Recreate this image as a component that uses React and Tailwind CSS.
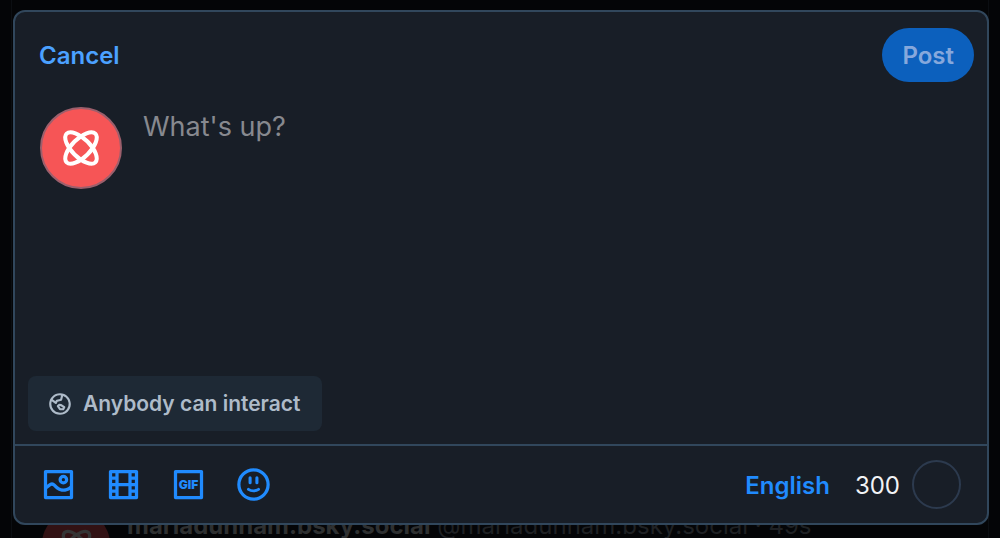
import React, { useState } from "react";

const MAX_LENGTH = 300;

const AtomIcon = ({ className }) => (
  <svg
    viewBox="0 0 24 24"
    fill="none"
    stroke="currentColor"
    strokeWidth="2.3"
    strokeLinejoin="round"
    className={className}
    aria-hidden="true"
  >
    <path d="M20.2 20.2c2.04-2.03.02-7.36-4.5-11.9-4.54-4.52-9.87-6.54-11.9-4.5-2.04 2.03-.02 7.36 4.5 11.9 4.54 4.52 9.87 6.54 11.9 4.5Z" />
    <path d="M15.7 15.7c4.52-4.54 6.54-9.87 4.5-11.9-2.03-2.04-7.36-.02-11.9 4.5-4.52 4.54-6.54 9.87-4.5 11.9 2.03 2.04 7.36.02 11.9-4.5Z" />
  </svg>
);

const Icon = ({ className, children }) => (
  <svg
    viewBox="0 0 24 24"
    fill="currentColor"
    fillRule="evenodd"
    className={className}
    aria-hidden="true"
  >
    {children}
  </svg>
);

const EarthIcon = () => (
  <Icon className="size-[26px]">
    <path d="M4.4 9.493C4.14 10.28 4 11.124 4 12a8 8 0 1 0 10.899-7.459l-.953 3.81a1 1 0 0 1-.726.727l-3.444.866-.772 1.533a1 1 0 0 1-1.493.35L4.4 9.493Zm.883-1.84L7.756 9.51l.44-.874a1 1 0 0 1 .649-.52l3.306-.832.807-3.227a7.993 7.993 0 0 0-7.676 3.597ZM2 12C2 6.477 6.477 2 12 2s10 4.477 10 10-4.477 10-10 10S2 17.523 2 12Zm8.43.162a1 1 0 0 1 .77-.29l1.89.121a1 1 0 0 1 .494.168l2.869 1.928a1 1 0 0 1 .336 1.277l-.973 1.946a1 1 0 0 1-.894.553h-2.92a1 1 0 0 1-.831-.445L9.225 14.5a1 1 0 0 1 .126-1.262l1.08-1.076Zm.915 1.913.177-.177 1.171.074 1.914 1.286-.303.607h-1.766l-1.194-1.79Z" />
  </Icon>
);

const ImageIcon = () => (
  <Icon className="size-[39px]">
    <path d="M3 4a1 1 0 0 1 1-1h16a1 1 0 0 1 1 1v16a1 1 0 0 1-1 1H4a1 1 0 0 1-1-1V4Zm2 1v7.213l1.246-.932.044-.03a3 3 0 0 1 3.863.454c1.468 1.58 2.941 2.749 4.847 2.749 1.703 0 2.855-.555 4-1.618V5H5Zm14 10.357c-1.112.697-2.386 1.097-4 1.097-2.81 0-4.796-1.755-6.313-3.388a1 1 0 0 0-1.269-.164L5 14.712V19h14v-3.643ZM15 8a1 1 0 1 0 0 2 1 1 0 0 0 0-2Zm-3 1a3 3 0 1 1 6 0 3 3 0 0 1-6 0Z" />
  </Icon>
);

const FilmIcon = () => (
  <Icon className="size-[39px]">
    <path d="M3 4a1 1 0 0 1 1-1h16a1 1 0 0 1 1 1v16a1 1 0 0 1-1 1H4a1 1 0 0 1-1-1V4Zm2 1v2h2V5H5Zm4 0v6h6V5H9Zm8 0v2h2V5h-2Zm2 4h-2v2h2V9Zm0 4h-2v2h2v-2Zm0 4h-2v2h2v-2Zm-4 2v-6H9v6h6Zm-8 0v-2H5v2h2Zm-2-4h2v-2H5v2Zm0-4h2V9H5v2Z" />
  </Icon>
);

const GifIcon = () => (
  <Icon className="size-[39px]">
    <path d="M3 4a1 1 0 0 1 1-1h16a1 1 0 0 1 1 1v16a1 1 0 0 1-1 1H4a1 1 0 0 1-1-1V4Zm2 1v14h14V5H5Z" />
    <text
      x="12"
      y="14.7"
      textAnchor="middle"
      fontSize="7.4"
      className="font-[Inter,sans-serif] font-black"
    >
      GIF
    </text>
  </Icon>
);

const EmojiIcon = () => (
  <svg
    viewBox="0 0 24 24"
    fill="none"
    stroke="currentColor"
    strokeWidth="2"
    strokeLinecap="round"
    className="size-[39px]"
    aria-hidden="true"
  >
    <circle cx="12" cy="12" r="9" />
    <path strokeWidth="1.9" d="M9.9 7.9v3M14.1 7.9v3" />
    <path strokeWidth="1.8" d="M8.9 15c1.7 1.2 4.5 1.2 6.2 0" />
  </svg>
);

const tools = [
  { label: "Add image", Glyph: ImageIcon },
  { label: "Add video", Glyph: FilmIcon },
  { label: "Add GIF", Glyph: GifIcon },
  { label: "Add emoji", Glyph: EmojiIcon },
];

const Feed = () => (
  <div className="absolute inset-0 mx-[11px] flex flex-col justify-end overflow-hidden border-x border-[#0b0e12]">
    <article className="-mb-10 flex items-start gap-[17px] px-[30px]">
      <div className="flex size-[68px] shrink-0 items-center justify-center rounded-full bg-[#321214]">
        <AtomIcon className="size-[35px] text-[#353535]" />
      </div>
      <p className="text-2xl whitespace-nowrap text-[#1f2124]">
        <span className="font-bold text-[#2e3031]">mariadunham.bsky.social</span>{" "}
        @mariadunham.bsky.social · 49s
      </p>
    </article>
  </div>
);

const App = () => {
  const [text, setText] = useState("");

  return (
    <main className="relative flex min-h-screen flex-col overflow-hidden bg-[#040507] pt-2.5 pr-[11px] pb-[13px] pl-[13px] font-[Inter,sans-serif]">
      <Feed />
      <form
        onSubmit={(e) => e.preventDefault()}
        className="relative flex grow flex-col rounded-xl border-2 border-[#31475c] bg-[#181e27]"
      >
        <div className="flex items-center justify-between pt-4 pr-[13px] pl-6">
          <button type="button" className="pt-0.5 text-2xl font-semibold text-[#4ba1ff]">
            Cancel
          </button>
          <button
            type="submit"
            className="h-[54px] rounded-full bg-[#0c60bd] px-5 pt-0.5 text-2xl font-semibold text-[#86a8dc]"
          >
            Post
          </button>
        </div>

        <div className="flex grow items-start gap-[21px] px-[25px] pt-[25px]">
          <div className="flex size-[82px] shrink-0 items-center justify-center rounded-full border-2 border-[#9c5f6c] bg-[#f65556]">
            <AtomIcon className="size-[42px] text-white" />
          </div>
          <textarea
            aria-label="Post text"
            placeholder="What's up?"
            maxLength={MAX_LENGTH}
            value={text}
            onChange={(e) => setText(e.target.value)}
            className="grow resize-none self-stretch bg-transparent text-[27px] leading-10 text-white outline-none placeholder:text-[#87898f]"
          />
        </div>

        <div className="px-[13px] pb-[13px]">
          <button
            type="button"
            className="flex h-[55px] items-center gap-2.5 rounded-lg bg-[#1e2935] pr-[22px] pl-[19px] text-[21px] font-semibold text-[#aebbc9]"
          >
            <EarthIcon />
            Anybody can interact
          </button>
        </div>

        <div className="flex h-[79px] items-center justify-between border-t-2 border-[#31475c] pr-[26px] pl-6">
          <div className="flex gap-[26px] text-[#208bfe]">
            {tools.map(({ label, Glyph }) => (
              <button key={label} type="button" aria-label={label}>
                <Glyph />
              </button>
            ))}
          </div>
          <div className="flex items-center">
            <button type="button" className="pt-0.5 text-2xl font-semibold text-[#208bfe]">
              English
            </button>
            <span className="ml-[25px] pt-0.5 text-2xl text-[#f1f3f5]">
              {MAX_LENGTH - text.length}
            </span>
            <div className="ml-3 size-[49px] rounded-full border-2 border-[#2c3a4e]" />
          </div>
        </div>
      </form>
    </main>
  );
};

export default App;
